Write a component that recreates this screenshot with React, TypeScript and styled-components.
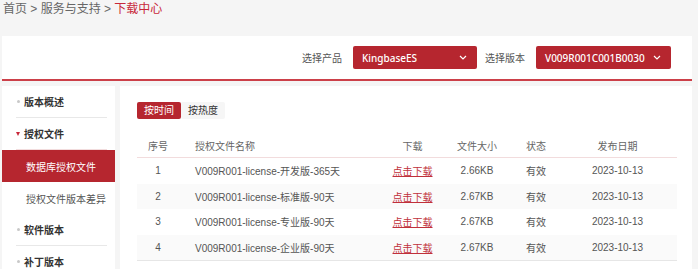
import styled, { createGlobalStyle } from "styled-components";

const GlobalStyle = createGlobalStyle`
  body {
    margin: 0;
    background: #f5f5f5;
    font-family: "Liberation Sans", "Noto Sans CJK SC", sans-serif;
    color: #555;
  }
`;

const RED = "#b6262f";

const Page = styled.div`
  width: 690px;
  padding: 0 6px 0 2px;
`;

const Breadcrumb = styled.div`
  height: 18px;
  line-height: 18px;
  font-size: 12px;
  color: #666;
  padding-left: 1px;
  margin-bottom: 18px;
  span {
    color: #c8283a;
  }
`;

const TopBar = styled.div`
  height: 43px;
  background: #fff;
  border-bottom: 2px solid #cc4049;
  display: flex;
  justify-content: flex-end;
  align-items: center;
  padding-right: 21px;
`;

const Label = styled.span`
  font-size: 10px;
  color: #555;
  margin: 0 11px 0 8px;
`;

const Select = styled.div<{ $width: number }>`
  width: ${(p) => p.$width}px;
  height: 23px;
  box-sizing: border-box;
  border-radius: 2px;
  background: ${RED};
  color: #fff;
  font-family: "Noto Sans", "Noto Sans CJK SC", sans-serif;
  font-size: 10px;
  font-weight: 500;
  display: flex;
  align-items: center;
  justify-content: space-between;
  padding: 0 10px 0 9px;
`;

const Body = styled.div`
  display: flex;
  gap: 5px;
  margin-top: 5px;
`;

const Sidebar = styled.div`
  width: 113px;
  background: #fff;
  flex-shrink: 0;
`;

const MenuItem = styled.div<{ $open?: boolean }>`
  height: 31px;
  margin: 0 8px 0 14px;
  border-bottom: 1px solid ${(p) => (p.$open ? "#f2dcdd" : "#e8e8e8")};
  display: flex;
  align-items: center;
  gap: 4px;
  font-size: 10px;
  font-weight: bold;
  color: #333;
`;

const Dot = styled.i`
  width: 3px;
  height: 3px;
  border-radius: 50%;
  background: #c8c8c8;
  margin-left: 1px;
`;

const Caret = styled.i`
  width: 0;
  height: 0;
  border-left: 2.5px solid transparent;
  border-right: 2.5px solid transparent;
  border-top: 4px solid #c8283a;
`;

const SubItem = styled.div<{ $active?: boolean }>`
  height: 32px;
  display: flex;
  align-items: center;
  padding-left: 24px;
  font-size: 10px;
  color: ${(p) => (p.$active ? "#fff" : "#555")};
  background: ${(p) => (p.$active ? RED : "transparent")};
`;

const Main = styled.div`
  flex: 1;
  background: #fff;
  padding: 16px 15px 20px 17px;
`;

const Tabs = styled.div`
  display: flex;
  margin-bottom: 14px;
`;

const Tab = styled.div<{ $active?: boolean }>`
  height: 17px;
  line-height: 17px;
  padding: 0 7px;
  font-size: 10px;
  border-radius: 2px;
  background: ${(p) => (p.$active ? RED : "#f6f6f6")};
  color: ${(p) => (p.$active ? "#fff" : "#333")};
`;

const Row = styled.div<{ $head?: boolean; $stripe?: boolean }>`
  display: grid;
  grid-template-columns: 42px 206px 55px 74px 44px 1fr;
  align-items: center;
  height: ${(p) => (p.$head ? "24px" : "25.5px")};
  font-size: 10px;
  color: ${(p) => (p.$head ? "#666" : "#555")};
  background: ${(p) => (p.$stripe ? "#fafafa" : "#fff")};
  border-bottom: ${(p) => (p.$head ? "1px solid #f2dcdd" : "none")};
  &:last-child {
    border-bottom: 1px solid #e6e6e6;
  }
`;

const Cell = styled.div<{ $left?: boolean }>`
  text-align: ${(p) => (p.$left ? "left" : "center")};
  padding-left: ${(p) => (p.$left ? "16px" : "0")};
  white-space: nowrap;
`;

const Link = styled.a`
  color: #c0303a;
  text-decoration: underline;
  cursor: pointer;
`;

const Chevron = () => (
  <svg width="8" height="5" viewBox="0 0 8 5">
    <path d="M1 1l3 3 3-3" fill="none" stroke="#fff" strokeWidth="1.2" />
  </svg>
);

const files = [
  { name: "V009R001-license-开发版-365天", size: "2.66KB" },
  { name: "V009R001-license-标准版-90天", size: "2.67KB" },
  { name: "V009R001-license-专业版-90天", size: "2.67KB" },
  { name: "V009R001-license-企业版-90天", size: "2.67KB" },
];

export default function App() {
  return (
    <Page>
      <GlobalStyle />
      <Breadcrumb>
        首页 &gt; 服务与支持 &gt; <span>下载中心</span>
      </Breadcrumb>
      <TopBar>
        <Label>选择产品</Label>
        <Select $width={124}>
          KingbaseES
          <Chevron />
        </Select>
        <Label>选择版本</Label>
        <Select $width={135}>
          V009R001C001B0030
          <Chevron />
        </Select>
      </TopBar>
      <Body>
        <Sidebar>
          <MenuItem>
            <Dot />
            版本概述
          </MenuItem>
          <MenuItem $open>
            <Caret />
            授权文件
          </MenuItem>
          <SubItem $active>数据库授权文件</SubItem>
          <SubItem>授权文件版本差异</SubItem>
          <MenuItem>
            <Dot />
            软件版本
          </MenuItem>
          <MenuItem>
            <Dot />
            补丁版本
          </MenuItem>
        </Sidebar>
        <Main>
          <Tabs>
            <Tab $active>按时间</Tab>
            <Tab>按热度</Tab>
          </Tabs>
          <div>
            <Row $head>
              <Cell>序号</Cell>
              <Cell $left>授权文件名称</Cell>
              <Cell>下载</Cell>
              <Cell>文件大小</Cell>
              <Cell>状态</Cell>
              <Cell>发布日期</Cell>
            </Row>
            {files.map((f, i) => (
              <Row key={f.name} $stripe={i % 2 === 1}>
                <Cell>{i + 1}</Cell>
                <Cell $left>{f.name}</Cell>
                <Cell>
                  <Link>点击下载</Link>
                </Cell>
                <Cell>{f.size}</Cell>
                <Cell>有效</Cell>
                <Cell>2023-10-13</Cell>
              </Row>
            ))}
          </div>
        </Main>
      </Body>
    </Page>
  );
}
